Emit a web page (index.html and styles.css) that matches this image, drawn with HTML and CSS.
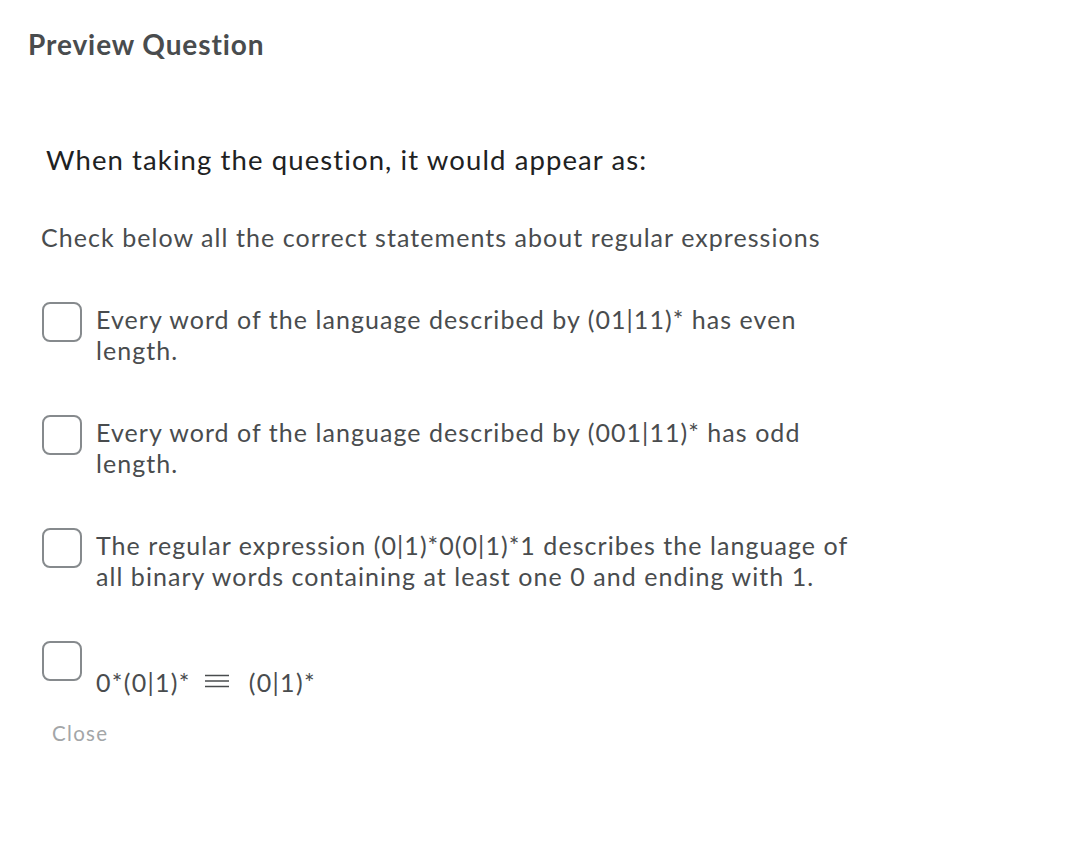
FILE: index.html
```html
<!DOCTYPE html>
<html>
<head>
<meta charset="utf-8">
<link rel="stylesheet" href="styles.css">
</head>
<body>
<div class="page">
  <h1 class="title">Preview Question</h1>
  <h2 class="intro">When taking the question, it would appear as:</h2>
  <p class="prompt">Check below all the correct statements about regular expressions</p>
  <ul class="options">
    <li class="option"><span class="box"></span><span class="text">Every word of the language described by (01|11)* has even length.</span></li>
    <li class="option"><span class="box"></span><span class="text">Every word of the language described by (001|11)* has odd length.</span></li>
    <li class="option"><span class="box"></span><span class="text">The regular expression (0|1)*0(0|1)*1 describes the language of all binary words containing at least one 0 and ending with 1.</span></li>
    <li class="option last"><span class="box"></span><span class="text small">0*(0|1)*<svg class="equiv" width="24" height="14" viewBox="0 0 24 14" aria-label="≡"><path d="M0 1.5H24M0 7H24M0 12.5H24" stroke="#494c4e" stroke-width="1.6" fill="none"/></svg>(0|1)*</span></li>
  </ul>
  <div class="close">Close</div>
</div>
</body>
</html>
```
FILE: styles.css
```css
html, body { margin: 0; padding: 0; background: #fff; }
body { font-family: Lato, "Open Sans", sans-serif; color: #494c4e; }
.page { padding: 26px 0 0 28px; }
.title { margin: 0; font-size: 28px; font-weight: 700; color: #494c4e; line-height: 36px; letter-spacing: 0.9px; }
.intro { margin: 80px 0 0 18px; font-size: 27.5px; font-weight: 400; color: #202122; line-height: 36px; letter-spacing: 1.1px; }
.prompt { margin: 43px 0 0 13px; font-size: 25px; color: #494c4e; line-height: 32px; letter-spacing: 1.05px; }
.options { list-style: none; margin: 49px 0 0 14px; padding: 0; }
.option { display: flex; align-items: flex-start; height: 113px; }
.box { flex: none; width: 36px; height: 36px; border: 2px solid #868a8d; border-radius: 8px; margin-top: 0; }
.text { margin-left: 14px; width: 775px; font-size: 25px; line-height: 31px; color: #494c4e; letter-spacing: 1.05px; margin-top: 2px; }
.option.last { height: auto; }
.text.small { font-size: 25px; margin-top: 26px; letter-spacing: 1.3px; }
.equiv { display: inline-block; margin: 0 20px 0 14px; vertical-align: 4px; }
.close { margin: 23px 0 0 24px; font-size: 20.5px; color: #a3a6a8; letter-spacing: 1.3px; }
```
